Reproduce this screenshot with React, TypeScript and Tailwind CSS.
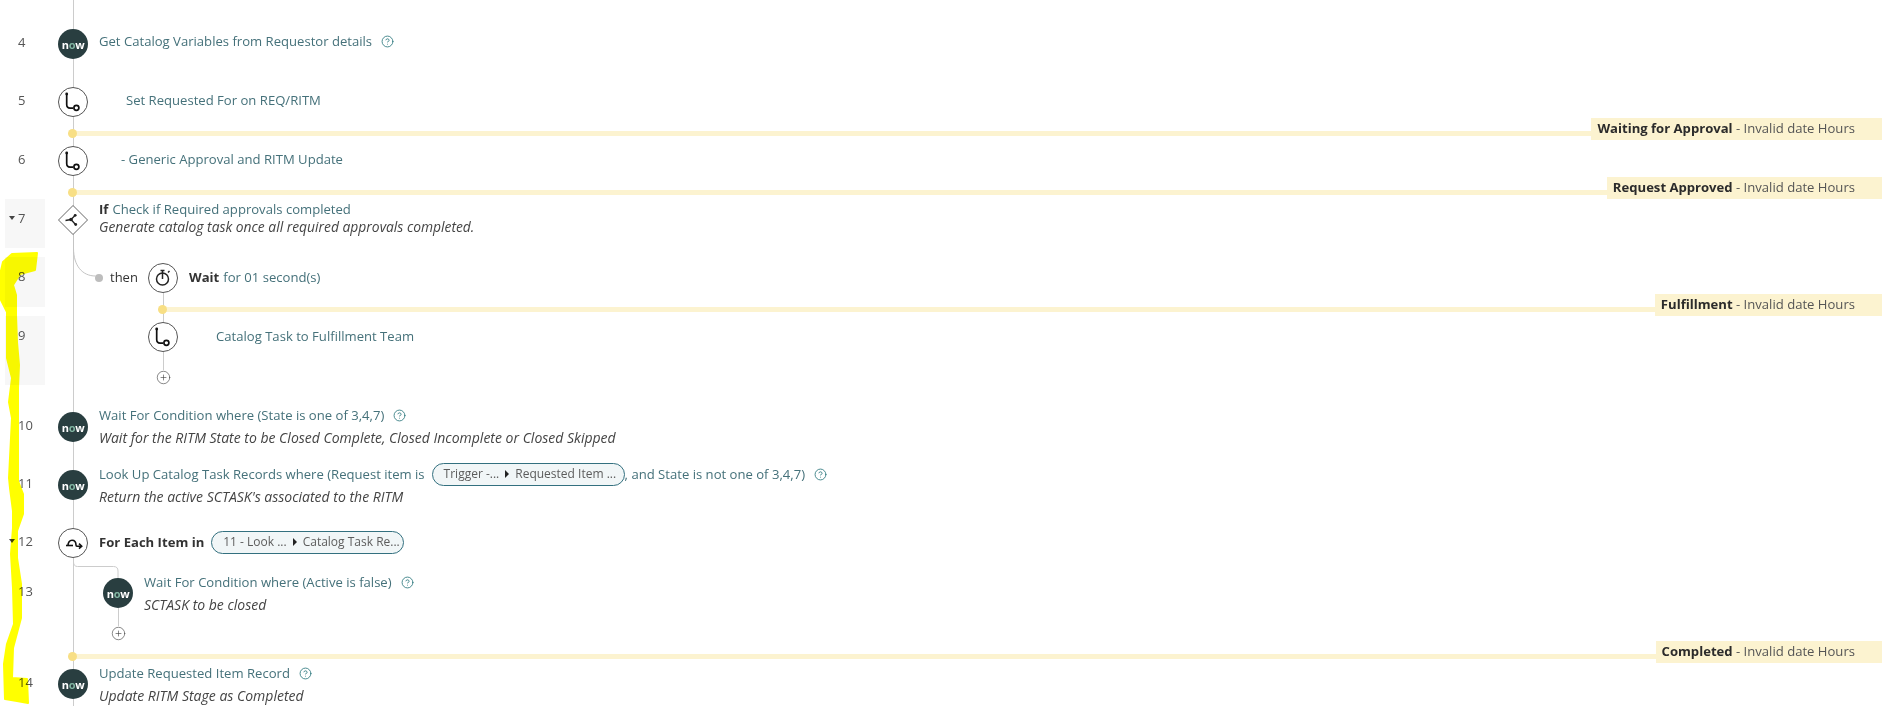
import type { ReactNode } from "react";
import { CircleHelp, CirclePlus } from "lucide-react";

const cells = [
    { n: "4", h: "h-[58px]" },
    { n: "5", h: "h-[59px]" },
    { n: "6", h: "h-[59px]" },
    { n: "7", h: "h-[49px] mb-[9px]", grey: true, caret: true },
    { n: "8", h: "h-[50px] mb-[9px]", grey: true },
    { n: "9", h: "h-[69px] mb-[21px]", grey: true },
    { n: "10", h: "h-[58px]" },
    { n: "11", h: "h-[58px]" },
    { n: "12", h: "h-[50px]", caret: true },
    { n: "13", h: "h-[91px]" },
    { n: "14", h: "h-[43px]" },
];

const ringClass = "relative z-10 flex h-[30px] w-[30px] shrink-0 items-center justify-center rounded-full border border-[#555] bg-white";

const NowIcon = () => (
    <div className="relative z-10 flex h-[30px] w-[30px] shrink-0 items-center justify-center rounded-full bg-[#293e40] text-[11px] font-bold leading-none tracking-[-0.3px] text-white">
        n<span className="text-[#81b5a1]">o</span>w
    </div>
);

const SubflowIcon = () => (
    <div className={ringClass}>
        <svg width="30" height="30" viewBox="0 0 30 30" fill="none" stroke="#111" strokeWidth="1.7" className="shrink-0">
            <circle cx="8.7" cy="7" r="1.4" fill="#111" stroke="none" />
            <path d="M8.7 7v10.5c0 2.6 1.6 3.6 3.4 3.6h3" />
            <circle cx="18.4" cy="20.8" r="2.5" />
        </svg>
    </div>
);

const TimerIcon = () => (
    <div className={ringClass}>
        <svg width="30" height="30" viewBox="0 0 30 30" fill="none" stroke="#222" strokeWidth="1.5" className="shrink-0">
            <circle cx="14.5" cy="16" r="6" />
            <path d="M14.5 16V7" />
            <path d="M12.5 7.500h4" />
            <path d="M20 9.500l1.500-1.500" />
        </svg>
    </div>
);

const LoopIcon = () => (
    <div className={ringClass}>
        <svg width="30" height="30" viewBox="0 0 30 30" fill="none" stroke="#111" strokeWidth="1.6" className="shrink-0">
            <path d="M8 17.500h7" />
            <path d="M10 17.500c0-3 1.600-5.300 4-5.300s4 2 4 4.800c0 .7.500 1.200 1 1.200h4.500" />
            <path d="M21 15.700l2.700 2.500-2.700 2.500" />
        </svg>
    </div>
);

const BranchIcon = () => (
    <svg width="30" height="30" viewBox="0 0 30 30" fill="none" className="relative z-10 shrink-0">
        <polygon points="15,0.500 29.500,15 15,29.500 0.500,15" fill="#fff" stroke="#666" />
        <path d="M7.500 15.500l5.500-1M13 14.500l4-4M13 14.500l4.500 5" stroke="#222" strokeWidth="1.300" />
        <circle cx="13" cy="14.500" r="1.800" fill="#222" />
        <circle cx="17.200" cy="10.300" r="1.400" fill="#222" />
        <circle cx="17.700" cy="19.500" r="1.400" fill="#222" />
    </svg>
);

const Help = () => <CircleHelp size={13} strokeWidth={1.6} className="ml-[9px] shrink-0 text-[#2f7a80]" />;

const Plus = () => <CirclePlus size={15} strokeWidth={1} className="relative z-10 -mx-px -my-px rounded-full bg-white text-[#444]" />;

const Pill = ({ left, right }: { left: string; right: string }) => (
    <span className="mx-[7px] flex h-[23px] w-[193px] shrink-0 items-center rounded-full border border-[#33707f] bg-[#f1f6f7] pl-[11px] text-[12px] text-[#5c5c5c]">
        {left}
        <span className="mx-[6px] h-0 w-0 border-y-[4px] border-l-[4px] border-y-transparent border-l-[#222]" />
        {right}
    </span>
);

const Title = ({ children }: { children: ReactNode }) => (
    <div className="flex h-[20px] items-center whitespace-nowrap text-[13.1px] leading-[20px] text-[#45717a]">{children}</div>
);

const Note = ({ children, gap = "mt-[3px] text-[14px]" }: { children: ReactNode; gap?: string }) => (
    <div className={`${gap} h-[20px] whitespace-nowrap italic leading-[20px] text-[#444]`}>{children}</div>
);

const Stage = ({ name, pad = "pl-[22px]" }: { name: string; pad?: string }) => (
    <div className={`flex h-[22px] items-end ${pad}`}>
        <div className="mb-[3px] flex h-[8px] flex-1 items-center">
            <div className="relative z-30 h-[9px] w-[9px] shrink-0 rounded-full bg-[#f8df85]" />
            <div className="relative z-20 -ml-[4px] h-[5px] flex-1 bg-[#fcf3d0]" />
        </div>
        <div className="relative z-20 flex h-[22px] items-center whitespace-nowrap bg-[#fcf3d0] pl-[6px] pr-[27px] text-[13.1px] text-[#555]">
            <b className="font-bold text-[#2b2b2b]">{name}</b>
            &nbsp;- Invalid date Hours
        </div>
    </div>
);

export default function App() {
    return (
        <div className="relative flex h-[706px] w-[1882px] overflow-hidden bg-white font-['Open_Sans',sans-serif] text-[13px]">
            <div className="w-[46px] shrink-0 pt-[23px]">
                {cells.map((c) => (
                    <div
                        key={c.n}
                        className={`ml-[5px] flex w-[40px] items-start pt-[9px] leading-[20px] text-[#555] ${c.h} ${c.grey ? "bg-[#f7f7f7]" : ""}`}
                    >
                        <span className="flex h-[20px] w-[13px] shrink-0 items-center justify-center">
                            {c.caret && <span className="h-0 w-0 border-x-[3px] border-t-[4px] border-x-transparent border-t-[#444]" />}
                        </span>
                        {c.n}
                    </div>
                ))}
            </div>

            <div className="relative min-w-0 flex-1">
                <div className="absolute bottom-0 left-[27px] top-0 w-px bg-[#ccc]" />

                <div className="flex h-[87px] pl-[12px] pt-[29px]">
                    <NowIcon />
                    <div className="ml-[11px] mt-[2px]">
                        <Title>Get Catalog Variables from Requestor details<Help /></Title>
                    </div>
                </div>

                <div className="flex h-[31px] pl-[12px]">
                    <SubflowIcon />
                    <div className="ml-[38px] mt-[3px]">
                        <Title>Set Requested For on REQ/RITM</Title>
                    </div>
                </div>

                <Stage name="Waiting for Approval" />

                <div className="flex h-[37px] pl-[12px] pt-[6px]">
                    <SubflowIcon />
                    <div className="ml-[33px] mt-[3px]">
                        <Title>- Generic Approval and RITM Update</Title>
                    </div>
                </div>

                <Stage name="Request Approved" />

                <div className="flex h-[63px] pl-[12px] pt-[6px]">
                    <BranchIcon />
                    <div className="ml-[11px] -mt-[6px]">
                        <Title><b className="mr-[4px] font-bold text-[#333]">If</b>Check if Required approvals completed</Title>
                        <Note gap="-mt-[2px] text-[13.85px]">Generate catalog task once all required approvals completed.</Note>
                    </div>
                </div>

                <div className="relative">
                    <div className="absolute left-[117px] top-[31px] h-[78px] w-px bg-[#ccc]" />
                    <svg width="30" height="50" viewBox="0 0 30 50" fill="none" stroke="#c4c4c4" className="absolute -top-[28px] left-[27px] z-0">
                        <path d="M0.500 0v14c0 18 9 28 22 28" />
                    </svg>

                    <div className="flex h-[32px] items-start pt-px">
                        <div className="ml-[49px] mt-[11px] h-[8px] w-[8px] shrink-0 rounded-full bg-[#bdbdbd]" />
                        <span className="ml-[7px] mt-[4px] w-[38px] shrink-0 leading-[20px] text-[#333]">then</span>
                        <TimerIcon />
                        <div className="ml-[11px] mt-[4px]">
                            <Title><b className="mr-[4px] font-bold text-[#333]">Wait</b>for 01 second(s)</Title>
                        </div>
                    </div>

                    <Stage name="Fulfillment" pad="pl-[112px]" />

                    <div className="flex h-[55px] pl-[102px] pt-[6px]">
                        <SubflowIcon />
                        <div className="ml-[38px] mt-[4px]">
                            <Title>Catalog Task to Fulfillment Team</Title>
                        </div>
                    </div>

                    <div className="flex h-[25px] pl-[111px]">
                        <Plus />
                    </div>
                </div>

                <div className="flex h-[74px] pl-[12px] pt-[16px]">
                    <NowIcon />
                    <div className="ml-[11px] -mt-[7px]">
                        <Title>Wait For Condition where (State is one of 3,4,7)<Help /></Title>
                        <Note>Wait for the RITM State to be Closed Complete, Closed Incomplete or Closed Skipped</Note>
                    </div>
                </div>

                <div className="flex h-[58px] pl-[12px]">
                    <NowIcon />
                    <div className="ml-[11px] -mt-[6px]">
                        <Title>
                            Look Up Catalog Task Records where (Request item is
                            <Pill left="Trigger -..." right="Requested Item ..." />
                            <span className="-ml-[7px]">, and State is not one of 3,4,7)</span>
                            <Help />
                        </Title>
                        <Note>Return the active SCTASK's associated to the RITM</Note>
                    </div>
                </div>

                <div className="relative flex h-[50px] pl-[12px]">
                    <LoopIcon />
                    <div className="ml-[11px] mt-[4px]">
                        <div className="flex h-[20px] items-center whitespace-nowrap text-[13.1px] font-bold leading-[20px] text-[#333]">
                            For Each Item in
                            <span className="font-normal"><Pill left="11 - Look ..." right="Catalog Task Re..." /></span>
                        </div>
                    </div>
                    <svg width="48" height="22" viewBox="0 0 48 22" fill="none" stroke="#ccc" className="absolute left-[27px] top-[30px]">
                        <path d="M0.500 0v4c0 3 1.500 4.500 4 4.500h36c3 0 4.500 1.500 4.500 4.500v9" />
                    </svg>
                </div>

                <div className="relative h-[63px] pl-[57px]">
                    <div className="absolute left-[72px] top-[30px] h-[20px] w-px bg-[#ccc]" />
                    <div className="flex h-[30px]">
                        <NowIcon />
                        <div className="ml-[11px] -mt-[6px]">
                            <Title>Wait For Condition where (Active is false)<Help /></Title>
                            <Note>SCTASK to be closed</Note>
                        </div>
                    </div>
                    <div className="ml-[9px] mt-[19px] flex">
                        <Plus />
                    </div>
                </div>

                <Stage name="Completed" />

                <div className="flex pl-[12px] pt-[6px]">
                    <NowIcon />
                    <div className="ml-[11px] -mt-[6px]">
                        <Title>Update Requested Item Record<Help /></Title>
                        <Note>Update RITM Stage as Completed</Note>
                    </div>
                </div>
            </div>

            {/* hand-drawn highlighter stroke from the screenshot */}
            <svg width="40" height="706" viewBox="0 0 40 706" className="pointer-events-none absolute left-0 top-0 z-30 mix-blend-multiply">
                <polygon
                    fill="#ffff00"
                    stroke="#ffff00"
                    strokeWidth="2"
                    strokeLinejoin="round"
                    points="37,253 35,270 20,274 13,285 16,295 16,315 17,342 19,365 18,388 18,412 18,445 18,481 23,494 23,514 17,531 17,558 21,584 21,618 13,648 12,678 27,679 28,703 17,701 5,699 4,664 7,644 14,624 13,588 11,554 13,528 13,511 10,488 9,478 12,418 9,402 12,378 7,358 7,312 0,298 0,275 3,262 12,254"
                />
            </svg>
        </div>
    );
}
